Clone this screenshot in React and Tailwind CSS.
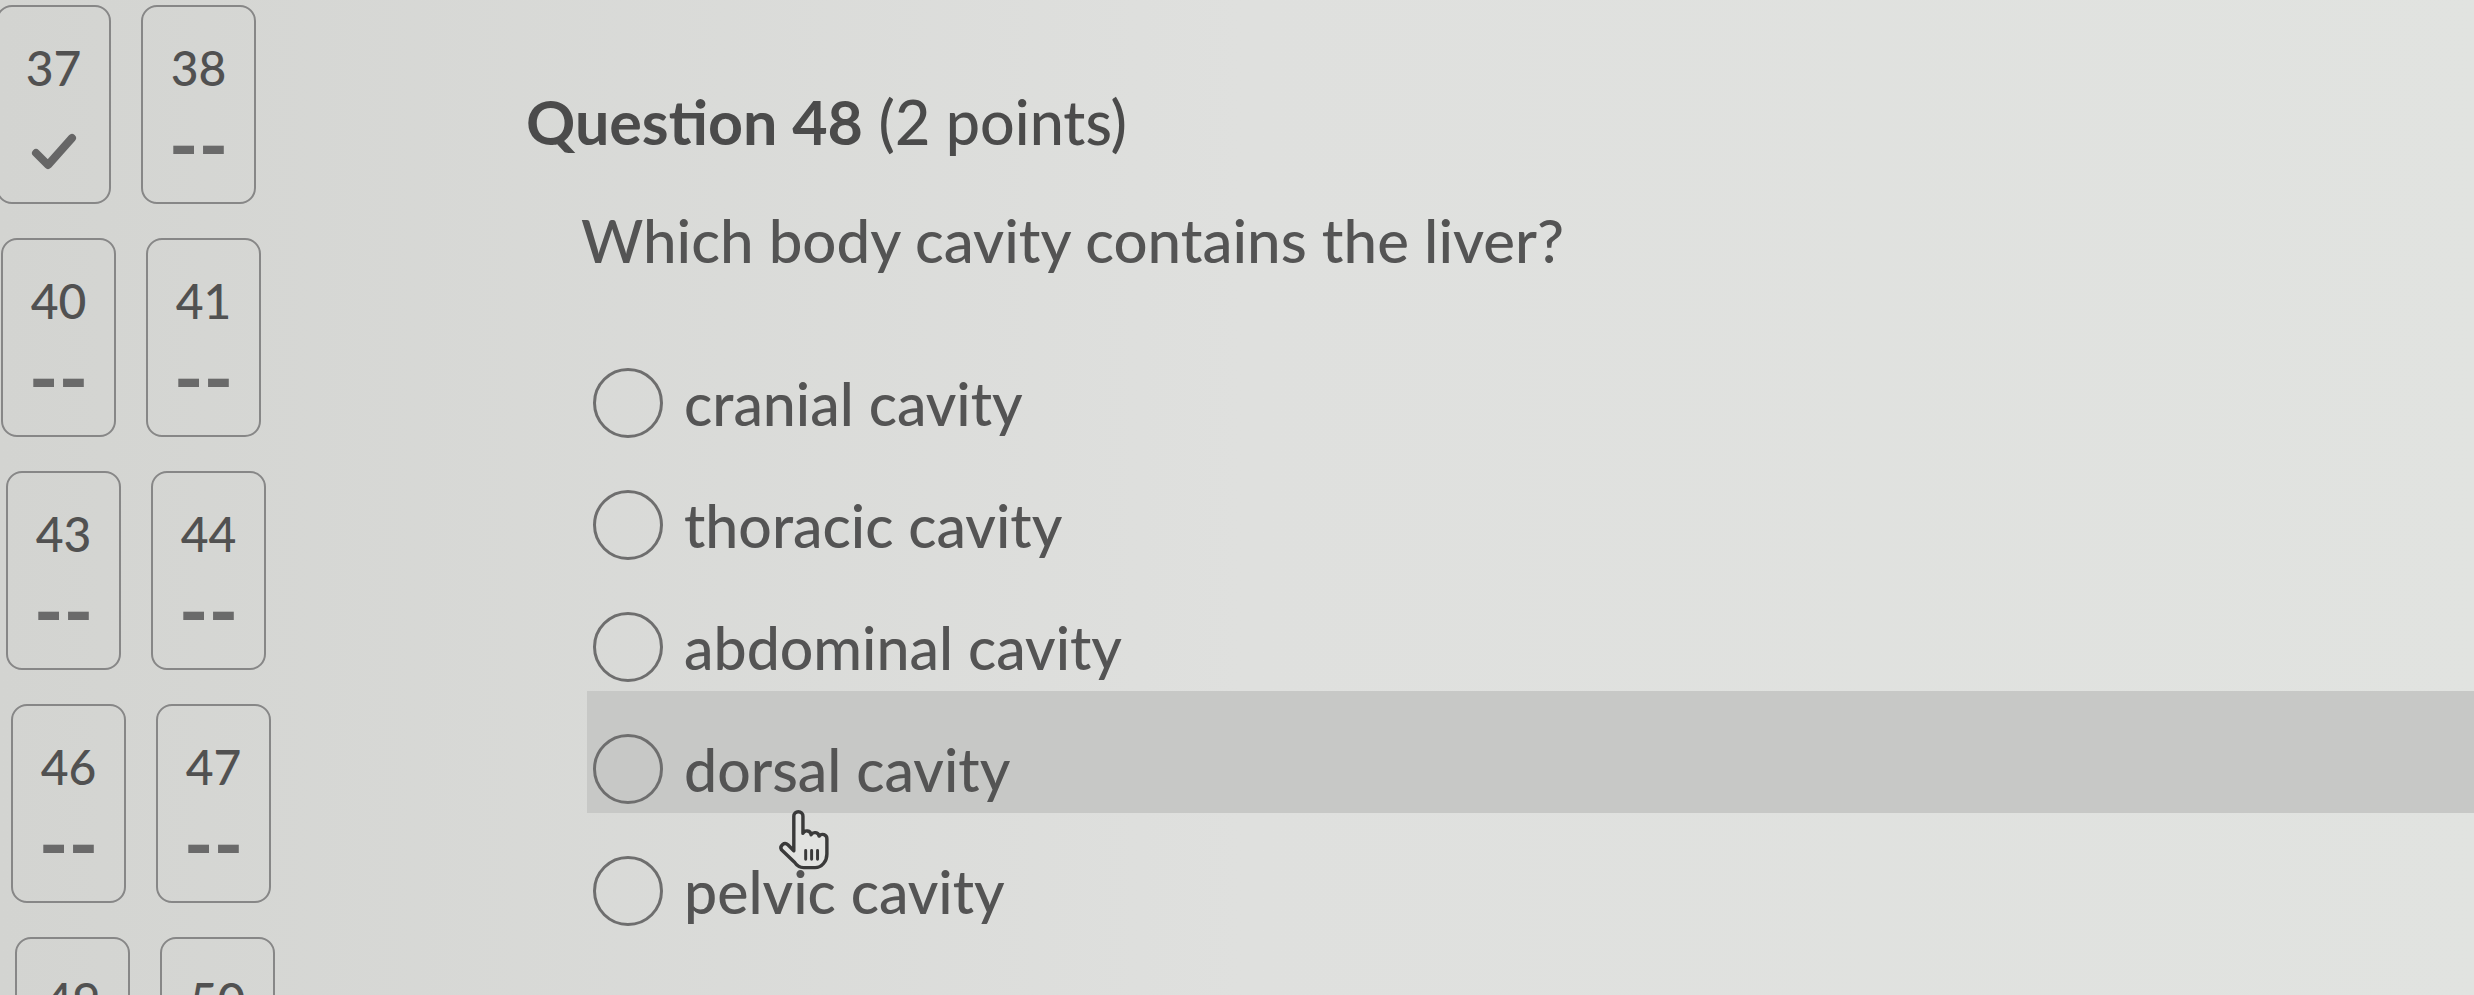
import React from 'react';

const rows = [
    { offset: 'ml-[-4px]', cards: [{ n: 37, done: true }, { n: 38 }] },
    { offset: 'ml-[1px]', cards: [{ n: 40 }, { n: 41 }] },
    { offset: 'ml-[6px]', cards: [{ n: 43 }, { n: 44 }] },
    { offset: 'ml-[11px]', cards: [{ n: 46 }, { n: 47 }] },
    { offset: 'ml-[15px]', cards: [{ n: 49 }, { n: 50 }] },
];

const options = ['cranial cavity', 'thoracic cavity', 'abdominal cavity', 'dorsal cavity', 'pelvic cavity'];

const Check = () => (
    <svg width="46" height="40" viewBox="0 0 46 40" fill="none">
        <path d="M5 21 L17 33 L41 6" stroke="#666666" strokeWidth="8" strokeLinecap="round" strokeLinejoin="round" />
    </svg>
);

const HandCursor = () => (
    <svg width="73" height="73" viewBox="0 0 32 32" fill="none">
        <path
            d="M10 4.5a2 2 0 0 1 4 0V12a1.9 1.9 0 0 1 3.6 .6a1.9 1.9 0 0 1 3.5 .6a1.9 1.9 0 0 1 3.4 1.2V21c0 3.2-2.2 6-5.2 6h-5c-2 0-3.1-1-4.1-2.5L4.6 19.2a1.8 1.8 0 0 1 2.8-2.2L10 19.6Z"
            fill="#e2e3e1"
            stroke="#3a3a3a"
            strokeWidth="1.5"
            strokeLinejoin="round"
        />
        <path d="M15.2 19.5v3.8M17.8 19.5v3.8M20.4 19.5v3.8" stroke="#3a3a3a" strokeWidth="1.3" strokeLinecap="round" />
    </svg>
);

const QuestionCard = ({ n, done }) => (
    <div className="w-[115px] h-[199px] shrink-0 rounded-[16px] border-2 border-[#878787] flex flex-col items-center pt-[37px]">
        <span className="text-[48px] font-medium leading-none text-[#515151]">{n}</span>
        <div className="h-[40px] mt-[40px] flex items-center justify-center">
            {done ? (
                <Check />
            ) : (
                <span className="block text-[80px] font-bold leading-none text-[#6a6a6a] -translate-y-[9px]">--</span>
            )}
        </div>
    </div>
);

export default function App() {
    return (
        <div className="relative h-[995px] w-full overflow-hidden flex bg-linear-to-r from-[#d3d4d1] via-[#dfe0de] to-[#e1e3e0] font-[Lato,sans-serif]">
            <aside className="w-[290px] shrink-0 pt-[5px] flex flex-col gap-[34px]">
                {rows.map((row, i) => (
                    <div key={i} className={`flex gap-[30px] ${row.offset}`}>
                        {row.cards.map((c) => (
                            <QuestionCard key={c.n} n={c.n} done={c.done} />
                        ))}
                    </div>
                ))}
            </aside>

            <main className="flex-1 flex flex-col pt-[91px] pl-[236px]">
                <h1 className="text-[61px] leading-none text-[#4b4b4b] whitespace-nowrap">
                    <span className="font-bold">Question 48</span> <span className="font-medium">(2 points)</span>
                </h1>
                <p className="mt-[58px] ml-[55px] text-[60px] font-medium leading-none text-[#545454] whitespace-nowrap">
                    Which body cavity contains the liver?
                </p>

                <div className="mt-[55px] ml-[61px] flex flex-col">
                    {options.map((opt) => (
                        <div
                            key={opt}
                            className={`h-[122px] pt-[34px] pl-[6px] flex items-center gap-[21px] ${opt === 'dorsal cavity' ? 'bg-[#c7c8c6]' : ''}`}
                        >
                            <span className="w-[70px] h-[70px] shrink-0 rounded-full border-[3px] border-[#6e6e6e]"></span>
                            <span className="text-[59px] font-medium leading-none text-[#545454] whitespace-nowrap">{opt}</span>
                        </div>
                    ))}
                </div>
            </main>

            <div className="absolute left-[771px] top-[806px]">
                <HandCursor />
            </div>
        </div>
    );
}
